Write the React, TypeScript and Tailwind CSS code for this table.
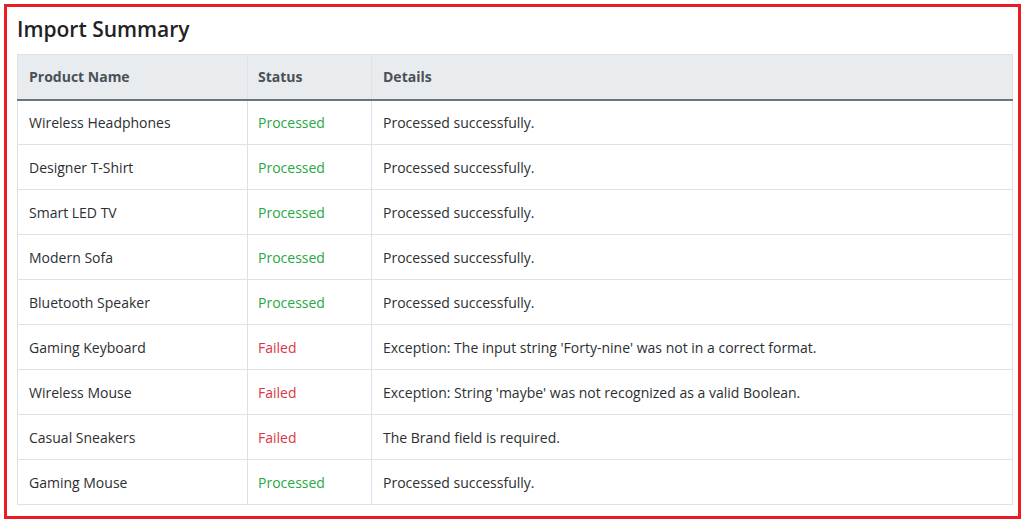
type Row = { name: string; ok: boolean; details: string }

const rows: Row[] = [
  { name: 'Wireless Headphones', ok: true, details: 'Processed successfully.' },
  { name: 'Designer T-Shirt', ok: true, details: 'Processed successfully.' },
  { name: 'Smart LED TV', ok: true, details: 'Processed successfully.' },
  { name: 'Modern Sofa', ok: true, details: 'Processed successfully.' },
  { name: 'Bluetooth Speaker', ok: true, details: 'Processed successfully.' },
  { name: 'Gaming Keyboard', ok: false, details: "Exception: The input string 'Forty-nine' was not in a correct format." },
  { name: 'Wireless Mouse', ok: false, details: "Exception: String 'maybe' was not recognized as a valid Boolean." },
  { name: 'Casual Sneakers', ok: false, details: 'The Brand field is required.' },
  { name: 'Gaming Mouse', ok: true, details: 'Processed successfully.' },
]

export default function App() {
  return (
    <div className="h-[519px] w-[1024px] bg-white pl-[4px] pt-[4px] pr-[3px] font-['Open_Sans',sans-serif] text-[#2b2f33]">
      <div className="h-[515px] border-[3px] border-[#ec1c24] pl-[10px] pr-[5px] pt-[6px]">
        <h4 className="h-[41px] text-[21px] font-semibold leading-[32px] text-[#1f2326]">Import Summary</h4>
        <table className="w-[996px] border-collapse text-[14px]">
          <thead>
            <tr className="h-[45px] bg-[#e9ecef] text-[#495057]">
              <th className="w-[230px] border border-b-2 border-[#dee2e6] border-b-[#6c757d] px-[11px] text-left font-bold">
                Product Name
              </th>
              <th className="w-[124px] border border-b-2 border-[#dee2e6] border-b-[#6c757d] px-[10px] text-left font-bold">
                Status
              </th>
              <th className="border border-b-2 border-[#dee2e6] border-b-[#6c757d] px-[11px] text-left font-bold">Details</th>
            </tr>
          </thead>
          <tbody>
            {rows.map((r) => (
              <tr key={r.name} className="h-[45px]">
                <td className="border border-[#dee2e6] px-[11px]">{r.name}</td>
                <td className={`border border-[#dee2e6] px-[10px] ${r.ok ? 'text-[#28a745]' : 'text-[#dc3545]'}`}>
                  {r.ok ? 'Processed' : 'Failed'}
                </td>
                <td className="border border-[#dee2e6] px-[11px]">{r.details}</td>
              </tr>
            ))}
          </tbody>
        </table>
      </div>
    </div>
  )
}
